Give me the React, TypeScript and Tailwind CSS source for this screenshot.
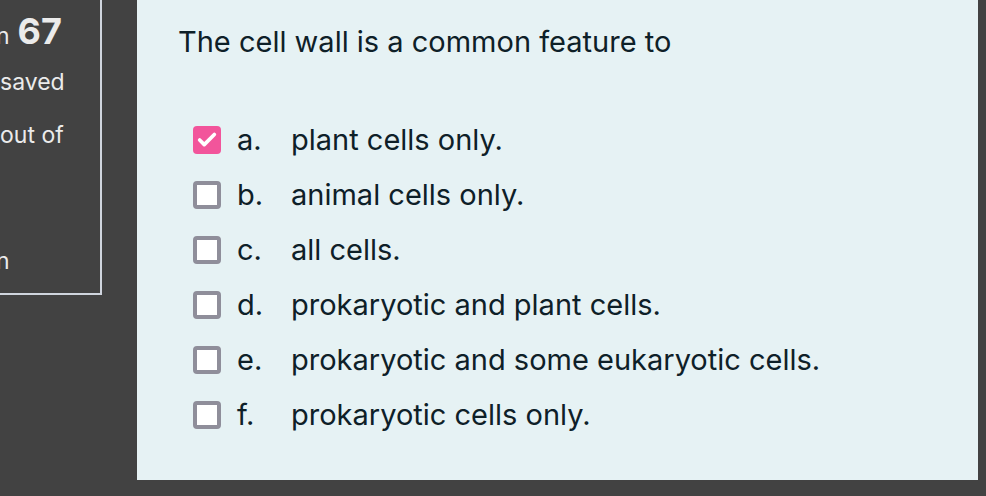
import { Check } from 'lucide-react'

const OPTIONS = [
  { key: 'a', text: 'plant cells only.', checked: true },
  { key: 'b', text: 'animal cells only.', checked: false },
  { key: 'c', text: 'all cells.', checked: false },
  { key: 'd', text: 'prokaryotic and plant cells.', checked: false },
  { key: 'e', text: 'prokaryotic and some eukaryotic cells.', checked: false },
  { key: 'f', text: 'prokaryotic cells only.', checked: false },
]

function Box({ checked }: { checked: boolean }) {
  if (checked) {
    return (
      <span className="flex h-[28px] w-[28px] shrink-0 items-center justify-center rounded-[4px] bg-[#f2559b]">
        <Check className="h-[22px] w-[22px] text-white" strokeWidth={4} />
      </span>
    )
  }
  return (
    <span className="h-[28px] w-[28px] shrink-0 rounded-[4px] border-[4px] border-[#8f8e9a] bg-white" />
  )
}

export default function App() {
  return (
    <div
      className="flex h-[496px] w-[986px] items-start overflow-hidden bg-[#424242]"
      style={{ fontFamily: 'Inter, "Noto Sans", sans-serif' }}
    >
      {/* question info block, mostly scrolled out of view */}
      <aside className="flex h-[295px] w-[102px] shrink-0 flex-col border-r-2 border-b-2 border-[#d0d5de] text-[23px] leading-[28px] text-[#ebebeb]">
        <div className="mt-[11px] flex h-[40px] items-baseline whitespace-nowrap">
          <span className="-ml-[4px]">n</span>
          <span className="ml-[8px] text-[36px] leading-[40px] font-bold">67</span>
        </div>
        <div className="mt-[17px] whitespace-nowrap">saved</div>
        <div className="mt-[25px] whitespace-nowrap">out of</div>
        <div className="mt-[98px] whitespace-nowrap">
          <span className="-ml-[4px]">n</span>
        </div>
      </aside>

      <main className="ml-[35px] h-[480px] w-[841px] shrink-0 bg-[#e6f2f4] pl-[41px] pt-[24px] text-[#0e2028]">
        <p className="text-[29px] leading-[36px]">The cell wall is a common feature to</p>

        <ul className="mt-[62px] flex flex-col gap-[19px] pl-[15px]">
          {OPTIONS.map((o) => (
            <li key={o.key} className="flex h-[36px] items-center">
              <Box checked={o.checked} />
              <span className="ml-[16px] w-[54px] text-[29px] leading-[36px]">{o.key}.</span>
              <span className="text-[29px] leading-[36px]">{o.text}</span>
            </li>
          ))}
        </ul>
      </main>
    </div>
  )
}
